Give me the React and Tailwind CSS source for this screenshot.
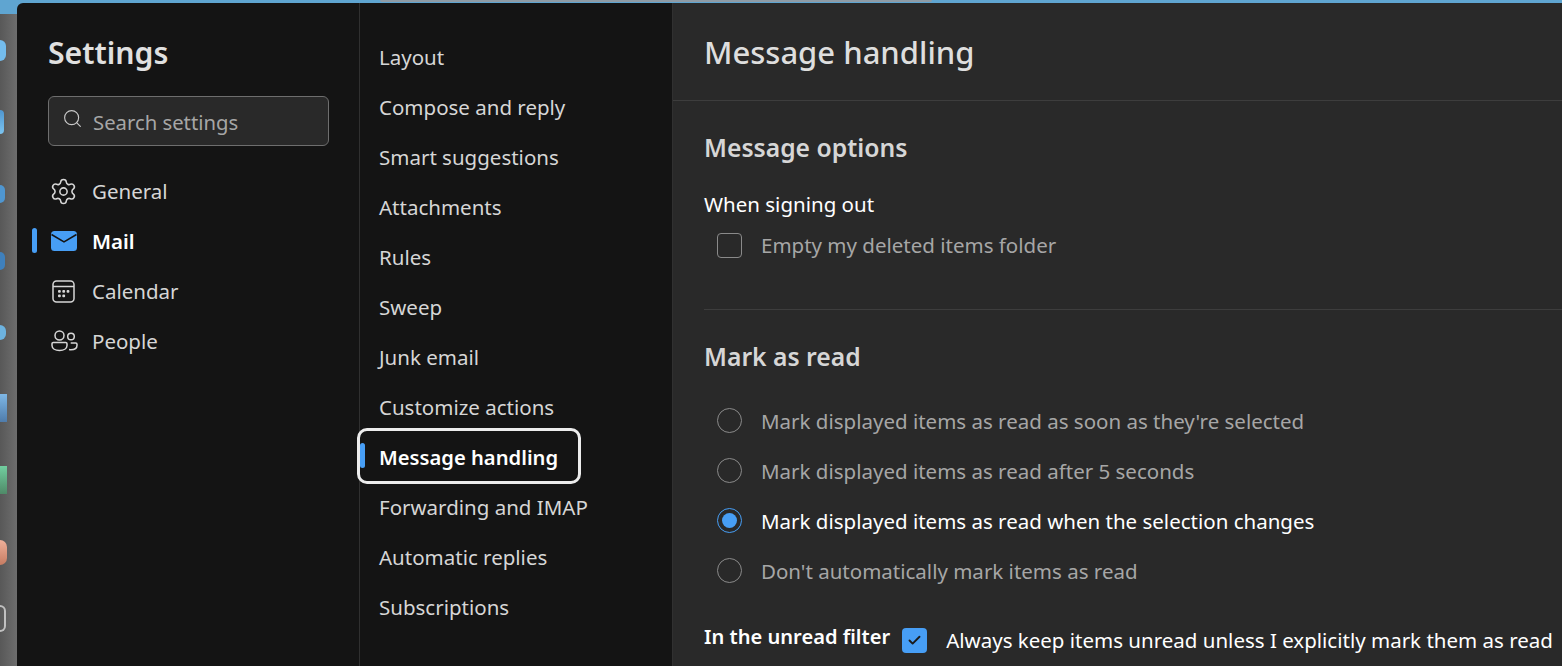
import { Settings, Search, Check } from 'lucide-react';

const font = "font-['Noto_Sans','Open_Sans',sans-serif]";

const topNav = [
  { label: 'General', icon: <Settings size={31} strokeWidth={1.3} /> },
  { label: 'Mail', active: true },
  { label: 'Calendar', icon: <CalendarGlyph /> },
  { label: 'People', icon: <PeopleGlyph /> },
];

const subNav = [
  'Layout',
  'Compose and reply',
  'Smart suggestions',
  'Attachments',
  'Rules',
  'Sweep',
  'Junk email',
  'Customize actions',
  'Message handling',
  'Forwarding and IMAP',
  'Automatic replies',
  'Subscriptions',
];

const readOptions = [
  { label: "Mark displayed items as read as soon as they're selected" },
  { label: 'Mark displayed items as read after 5 seconds' },
  { label: 'Mark displayed items as read when the selection changes', checked: true },
  { label: "Don't automatically mark items as read" },
];

function CalendarGlyph() {
  return (
    <svg width="28" height="28" viewBox="0 0 28 28" fill="none" stroke="currentColor" strokeWidth="1.5">
      <rect x="3" y="4" width="21" height="21" rx="3.5" />
      <path d="M3 9.500h21" />
      <g fill="currentColor" stroke="none">
        <rect x="8" y="13" width="2.800" height="2.800" rx="1" />
        <rect x="12.300" y="13" width="2.800" height="2.800" rx="1" />
        <rect x="16.600" y="13" width="2.800" height="2.800" rx="1" />
        <rect x="8" y="17.500" width="2.800" height="2.800" rx="1" />
        <rect x="12.300" y="17.500" width="2.800" height="2.800" rx="1" />
      </g>
    </svg>
  );
}

function PeopleGlyph() {
  return (
    <svg width="28" height="28" viewBox="0 0 28 28" fill="none" stroke="currentColor" strokeWidth="1.5">
      <circle cx="9.500" cy="8.500" r="4.500" />
      <circle cx="21" cy="9.500" r="3.300" />
      <path d="M2 16.800c0-.7.5-1.300 1.300-1.300h12.400c.8 0 1.300.6 1.300 1.300v1.700c0 3.200-3.300 5-7.500 5s-7.500-1.800-7.500-5z" />
      <path d="M19 22.500c.6.100 1.200.2 1.800.2 3.300 0 6.200-1.400 6.200-4.500v-.9c0-.8-.6-1.300-1.300-1.300h-5" />
    </svg>
  );
}

function MailGlyph() {
  return (
    <svg width="28" height="28" viewBox="0 0 28 28">
      <path d="M1 7.500A3.500 3.500 0 0 1 4.500 4h19A3.500 3.500 0 0 1 27 7.500v13a3.500 3.500 0 0 1-3.500 3.500h-19A3.500 3.500 0 0 1 1 20.500z" fill="#479ef5" />
      <path d="M1.500 7.500 14 15l12.500-7.500" fill="none" stroke="#141414" strokeWidth="1.500" />
    </svg>
  );
}

function Radio({ checked }) {
  return (
    <span className={`flex h-[25px] w-[25px] shrink-0 items-center justify-center rounded-full border ${checked ? 'border-[#479ef5]' : 'border-[#8a8a8a]'}`}>
      {checked && <span className="h-[15px] w-[15px] rounded-full bg-[#479ef5]" />}
    </span>
  );
}

function DockStrip() {
  return (
    <div className="flex h-full w-[17px] shrink-0 flex-col items-start overflow-hidden bg-gradient-to-r from-[#585858] to-[#6e6e6e]">
      <div className="h-[11px] w-full shrink-0 bg-[#5fa5d1]" />
      <div className="mt-[26px] h-[21px] w-[6px] rounded-r-md bg-[#74bcec]" />
      <div className="mt-[49px] h-[24px] w-[4px] rounded-r-sm bg-gradient-to-b from-[#4f96d0] to-[#7cc4f0]" />
      <div className="mt-[51px] h-[18px] w-[5px] rounded-r-full bg-[#4f96d0]" />
      <div className="mt-[49px] h-[18px] w-[5px] rounded-r-full bg-[#3f80bc]" />
      <div className="mt-[55px] h-[15px] w-[6px] rounded-r-md bg-[#6db3e0]" />
      <div className="mt-[54px] h-[28px] w-[7px] bg-gradient-to-b from-[#7fb8e6] to-[#4f7cab]" />
      <div className="mt-[44px] h-[28px] w-[7px] bg-gradient-to-b from-[#72cfa0] to-[#4f8a68]" />
      <div className="mt-[46px] h-[25px] w-[7px] rounded-r-full bg-gradient-to-b from-[#eeb09a] to-[#c67c62]" />
      <div className="mt-[40px] h-[27px] w-[6px] rounded-r-md border-2 border-l-0 border-[#c0c0c0]" />
    </div>
  );
}

export default function App() {
  return (
    <div className={`flex h-[666px] w-full flex-col overflow-hidden bg-[#5fa5d1] ${font}`}>
      <div className="h-[3px] shrink-0">
        <div className="ml-[380px] h-[2px] w-[552px] rounded-b bg-[#8f9ba5]" />
      </div>
      <div className="flex min-h-0 flex-1">
        <DockStrip />
        <div className="flex min-w-0 flex-1 overflow-hidden rounded-tl-md">
          {/* settings categories */}
          <div className="w-[343px] shrink-0 border-r border-[#303030] bg-[#141414] pl-[31px] pr-[30px]">
            <h1 className="mt-[27px] text-[30.200px] leading-[46px] font-semibold text-[#e0e0e0]">Settings</h1>
            <div className="mt-[20px] flex h-[50px] items-center rounded-md border border-[#6e6e6e] bg-[#292929] pl-[13px]">
              <Search size={21} strokeWidth={1.300} className="-mt-[5px] text-[#c8c8c8]" />
              <span className="mt-[3px] ml-[10px] text-[20.300px] text-[#a6a6a6]">Search settings</span>
            </div>
            <nav className="mt-5">
              {topNav.map((item) => (
                <div key={item.label} className="relative flex h-[50px] items-center">
                  {item.active && <span className="absolute top-[12px] -left-[16px] h-[25px] w-[5px] rounded-full bg-[#479ef5]" />}
                  <span className="ml-[1px] flex w-[29px] justify-center text-[#d6d6d6]">{item.active ? <MailGlyph /> : item.icon}</span>
                  <span className={`ml-[14px] text-[20.500px] ${item.active ? 'font-semibold text-white' : 'text-[#d6d6d6]'}`}>{item.label}</span>
                </div>
              ))}
            </nav>
          </div>

          {/* mail sub pages */}
          <div className="w-[313px] shrink-0 border-r border-[#303030] bg-[#141414] pt-[29px]">
            {subNav.map((label) => {
              const active = label === 'Message handling';
              return (
                <div key={label} className="flex h-[50px] items-center">
                  {active ? (
                    <div className="relative -mt-[3px] -ml-[3px] flex h-[56px] w-[224px] items-center rounded-[10px] border-[3px] border-[#ececec] pt-[3px] pl-[19px]">
                      <span className="absolute top-[12px] left-[0px] h-[25px] w-[5px] rounded-full bg-[#479ef5]" />
                      <span className="text-[20.200px] font-semibold text-white">{label}</span>
                    </div>
                  ) : (
                    <span className="ml-[19px] text-[20.500px] text-[#d6d6d6]">{label}</span>
                  )}
                </div>
              );
            })}
          </div>

          {/* content */}
          <div className="min-w-0 flex-1 bg-[#292929]">
            <div className="flex h-[98px] items-center border-b border-[#3d3d3d] pl-[31px]">
              <h2 className="mt-[2px] text-[31px] font-medium whitespace-nowrap text-[#dedede]">Message handling</h2>
            </div>
            <div className="pl-[31px]">
              <h3 className="mt-[27px] text-[24.700px] leading-[40px] font-semibold text-[#d6d6d6]">Message options</h3>
              <p className="mt-[20px] text-[20.500px] leading-[32px] text-white">When signing out</p>
              <label className="mt-[13px] flex h-[25px] items-center pl-[13px]">
                <span className="h-[25px] w-[25px] shrink-0 rounded-[4px] border border-[#8a8a8a]" />
                <span className="ml-[19px] text-[20.500px] whitespace-nowrap text-[#a6a6a6]">Empty my deleted items folder</span>
              </label>
              <div className="mt-[51px] border-t border-[#3d3d3d]" />
              <h3 className="mt-[27px] text-[24.700px] leading-[40px] font-semibold text-[#d6d6d6]">Mark as read</h3>
              <div className="mt-[18px]">
                {readOptions.map((opt) => (
                  <label key={opt.label} className="flex h-[50px] items-center pl-[13px]">
                    <Radio checked={opt.checked} />
                    <span className={`mt-[2px] ml-[19px] text-[20.500px] whitespace-nowrap ${opt.checked ? 'text-white' : 'text-[#a6a6a6]'}`}>{opt.label}</span>
                  </label>
                ))}
              </div>
              <div className="mt-[30px] flex items-center whitespace-nowrap">
                <span className="-mt-[6px] text-[20.100px] font-semibold text-white">In the unread filter</span>
                <span className="ml-[12px] flex h-[25px] w-[25px] shrink-0 items-center justify-center rounded-[4px] bg-[#479ef5]">
                  <Check size={15} strokeWidth={3} className="text-[#1a1a1a]" />
                </span>
                <span className="ml-[19px] text-[20.500px] text-white">Always keep items unread unless I explicitly mark them as read</span>
              </div>
            </div>
          </div>
        </div>
      </div>
    </div>
  );
}
